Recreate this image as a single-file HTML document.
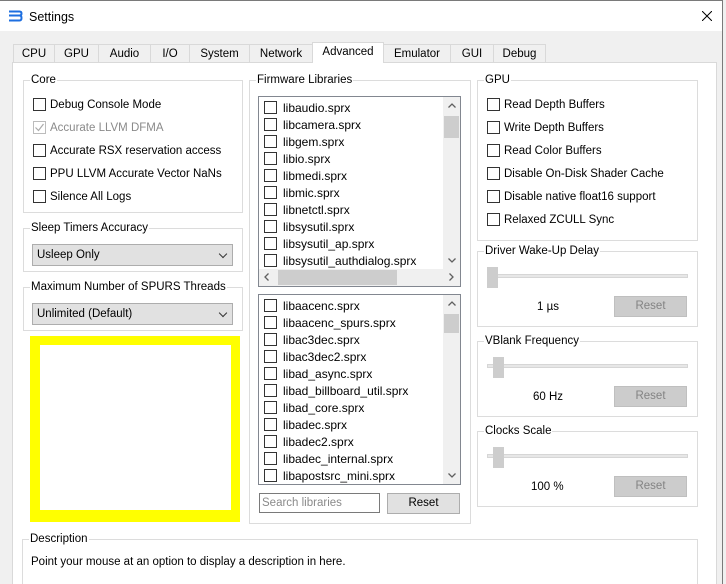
<!DOCTYPE html>
<html><head><meta charset="utf-8"><style>
*{box-sizing:border-box;margin:0;padding:0}
html,body{width:726px;height:584px;overflow:hidden}
body{background:#f0f0f0;font-family:"Liberation Sans",sans-serif;font-size:11.5px;color:#000;position:relative}
.a{position:absolute}
.tb{left:0;top:0;width:722px;height:31px;background:#fff;border-top:1px solid #7a7a7a}
.wb{left:722px;top:0;width:1px;height:584px;background:#7a7a7a}
.tab{position:absolute;top:44px;height:19px;background:#f0f0f0;border:1px solid #d9d9d9;border-bottom:none;text-align:center;line-height:18px;font-size:11.5px}
.pane{left:12px;top:62px;width:705px;height:522px;background:#fff;border:1px solid #d9d9d9;border-bottom:none}
.g{position:absolute;border:1px solid #dcdcdc}
.gt{position:absolute;top:-8px;left:6px;background:#fff;padding:0 1px;line-height:14px}
.cb{position:absolute;width:13px;height:13px;border:1px solid #333;background:#fff}
.lbl{position:absolute;line-height:14px;white-space:nowrap}
.combo{position:absolute;height:22px;background:#e1e1e1;border:1px solid #adadad;line-height:20px;padding-left:4px}
.chev{position:absolute;right:6px;top:6px;width:6px;height:6px;border-right:1px solid #333;border-bottom:1px solid #333;transform:rotate(45deg)}
.lb{position:absolute;border:1px solid #828790;background:#fff;overflow:hidden}
.it{position:absolute;left:5px;height:17px;white-space:nowrap}
.it .cb{left:0;top:2px;border-color:#333}
.it span{position:absolute;left:19px;top:2px;line-height:14px;font-size:12px}
.vs{position:absolute;right:0;top:0;width:17px;background:#f0f0f0;z-index:2}
.btn{position:absolute;background:#e1e1e1;border:1px solid #adadad;text-align:center;line-height:19px}
.dbtn{position:absolute;background:#cccccc;border:1px solid #bfbfbf;color:#838383;text-align:center;line-height:19px}
.track{position:absolute;height:4px;background:#e7e7e7;border:1px solid #d6d6d6}
.hd{position:absolute;width:11px;height:21px;background:#cdcdcd}
</style></head><body>
<div class="a tb">
 <svg class="a" style="left:8px;top:9px" width="15" height="12" viewBox="0 0 15 12"><path d="M1 1.5H11.5Q13.5 1.5 13.5 3.5Q13.5 5.5 11.5 5.5H3M1 5.5H11.5Q13.5 5.5 13.5 8Q13.5 10.5 11.5 10.5H1" fill="none" stroke="#1e6fe0" stroke-width="2"/></svg>
 <div class="lbl" style="left:29px;top:9px;font-size:12.5px">Settings</div>
 <svg class="a" style="left:702px;top:10px" width="10" height="10"><path d="M0 0L10 10M10 0L0 10" stroke="#000" stroke-width="1"/></svg>
</div>
<div class="a wb"></div>
<div class="tab" style="left:13px;width:42px">CPU</div>
<div class="tab" style="left:54px;width:45px">GPU</div>
<div class="tab" style="left:98px;width:53px">Audio</div>
<div class="tab" style="left:150px;width:40px">I/O</div>
<div class="tab" style="left:189px;width:61px">System</div>
<div class="tab" style="left:249px;width:64px">Network</div>
<div class="tab" style="left:383px;width:68px">Emulator</div>
<div class="tab" style="left:450px;width:44px">GUI</div>
<div class="tab" style="left:493px;width:53px">Debug</div>
<div class="a pane"></div>
<div class="tab" style="left:312px;top:42px;width:72px;height:21px;background:#fff;z-index:2">Advanced</div>

<!-- Core -->
<div class="g" style="left:23px;top:80px;width:220px;height:133px"><div class="gt">Core</div></div>
<div class="cb" style="left:33px;top:98px"></div><div class="lbl" style="left:50px;top:98px">Debug Console Mode</div>
<div class="cb" style="left:33px;top:121px;border-color:#bcbcbc"><svg width="11" height="11" style="position:absolute;left:0;top:0"><path d="M1.5 5.5L4.5 8.5L9.5 2" fill="none" stroke="#aaa" stroke-width="1.2"/></svg></div><div class="lbl" style="left:50px;top:121px;color:#8a8a8a">Accurate LLVM DFMA</div>
<div class="cb" style="left:33px;top:144px"></div><div class="lbl" style="left:50px;top:144px">Accurate RSX reservation access</div>
<div class="cb" style="left:33px;top:167px"></div><div class="lbl" style="left:50px;top:167px">PPU LLVM Accurate Vector NaNs</div>
<div class="cb" style="left:33px;top:190px"></div><div class="lbl" style="left:50px;top:190px">Silence All Logs</div>

<div class="g" style="left:23px;top:228px;width:220px;height:44px"><div class="gt">Sleep Timers Accuracy</div></div>
<div class="combo" style="left:32px;top:244px;width:201px">Usleep Only<div class="chev"></div></div>
<div class="g" style="left:23px;top:287px;width:220px;height:44px"><div class="gt">Maximum Number of SPURS Threads</div></div>
<div class="combo" style="left:32px;top:303px;width:201px">Unlimited (Default)<div class="chev"></div></div>

<div class="a" style="left:30px;top:336px;width:210px;height:186px;border:9px solid #ffff00;border-left-width:10px;border-bottom-width:12px;background:#fff"></div>

<!-- Firmware -->
<div class="g" style="left:249px;top:80px;width:222px;height:444px"><div class="gt">Firmware Libraries</div></div>
<div class="lb" style="left:258px;top:96px;width:203px;height:191px">
 <div class="vs" style="height:172px"><svg class="a" style="left:5px;top:6px" width="8" height="5"><path d="M0.5 4.5L4 1L7.5 4.5" fill="none" stroke="#606060" stroke-width="1.3"/></svg><div class="a" style="left:1px;top:19px;width:15px;height:22px;background:#cdcdcd"></div><svg class="a" style="left:5px;top:161px" width="8" height="5"><path d="M0.5 0.5L4 4L7.5 0.5" fill="none" stroke="#606060" stroke-width="1.3"/></svg></div>
 <div class="a" style="left:0;top:172px;width:201px;height:17px;background:#f0f0f0;z-index:2"><div class="a" style="left:19px;top:1px;width:119px;height:15px;background:#cdcdcd"></div><svg class="a" style="left:5px;top:4px" width="5" height="8"><path d="M4.5 0.5L1 4L4.5 7.5" fill="none" stroke="#606060" stroke-width="1.3"/></svg><svg class="a" style="left:190px;top:4px" width="5" height="8"><path d="M0.5 0.5L4 4L0.5 7.5" fill="none" stroke="#606060" stroke-width="1.3"/></svg></div>
 <div class="it" style="top:2px"><div class="cb"></div><span>libaudio.sprx</span></div>
 <div class="it" style="top:19px"><div class="cb"></div><span>libcamera.sprx</span></div>
 <div class="it" style="top:36px"><div class="cb"></div><span>libgem.sprx</span></div>
 <div class="it" style="top:53px"><div class="cb"></div><span>libio.sprx</span></div>
 <div class="it" style="top:70px"><div class="cb"></div><span>libmedi.sprx</span></div>
 <div class="it" style="top:87px"><div class="cb"></div><span>libmic.sprx</span></div>
 <div class="it" style="top:104px"><div class="cb"></div><span>libnetctl.sprx</span></div>
 <div class="it" style="top:121px"><div class="cb"></div><span>libsysutil.sprx</span></div>
 <div class="it" style="top:138px"><div class="cb"></div><span>libsysutil_ap.sprx</span></div>
 <div class="it" style="top:155px"><div class="cb"></div><span>libsysutil_authdialog.sprx</span></div>
</div>
<div class="lb" style="left:258px;top:294px;width:203px;height:191px">
 <div class="vs" style="height:189px"><svg class="a" style="left:5px;top:6px" width="8" height="5"><path d="M0.5 4.5L4 1L7.5 4.5" fill="none" stroke="#606060" stroke-width="1.3"/></svg><div class="a" style="left:1px;top:19px;width:15px;height:19px;background:#cdcdcd"></div><svg class="a" style="left:5px;top:178px" width="8" height="5"><path d="M0.5 0.5L4 4L7.5 0.5" fill="none" stroke="#606060" stroke-width="1.3"/></svg></div>
 <div class="it" style="top:2px"><div class="cb"></div><span>libaacenc.sprx</span></div>
 <div class="it" style="top:19px"><div class="cb"></div><span>libaacenc_spurs.sprx</span></div>
 <div class="it" style="top:36px"><div class="cb"></div><span>libac3dec.sprx</span></div>
 <div class="it" style="top:53px"><div class="cb"></div><span>libac3dec2.sprx</span></div>
 <div class="it" style="top:70px"><div class="cb"></div><span>libad_async.sprx</span></div>
 <div class="it" style="top:87px"><div class="cb"></div><span>libad_billboard_util.sprx</span></div>
 <div class="it" style="top:104px"><div class="cb"></div><span>libad_core.sprx</span></div>
 <div class="it" style="top:121px"><div class="cb"></div><span>libadec.sprx</span></div>
 <div class="it" style="top:138px"><div class="cb"></div><span>libadec2.sprx</span></div>
 <div class="it" style="top:155px"><div class="cb"></div><span>libadec_internal.sprx</span></div>
 <div class="it" style="top:172px"><div class="cb"></div><span>libapostsrc_mini.sprx</span></div>
</div>
<div class="a" style="left:259px;top:493px;width:121px;height:20px;border:1px solid #7a7a7a;background:#fff;color:#8a8a8a;line-height:18px;padding-left:2px">Search libraries</div>
<div class="btn" style="left:387px;top:493px;width:73px;height:21px">Reset</div>

<!-- GPU -->
<div class="g" style="left:477px;top:80px;width:221px;height:161px"><div class="gt">GPU</div></div>
<div class="cb" style="left:487px;top:98px"></div><div class="lbl" style="left:504px;top:98px">Read Depth Buffers</div>
<div class="cb" style="left:487px;top:121px"></div><div class="lbl" style="left:504px;top:121px">Write Depth Buffers</div>
<div class="cb" style="left:487px;top:144px"></div><div class="lbl" style="left:504px;top:144px">Read Color Buffers</div>
<div class="cb" style="left:487px;top:167px"></div><div class="lbl" style="left:504px;top:167px">Disable On-Disk Shader Cache</div>
<div class="cb" style="left:487px;top:190px"></div><div class="lbl" style="left:504px;top:190px">Disable native float16 support</div>
<div class="cb" style="left:487px;top:213px"></div><div class="lbl" style="left:504px;top:213px">Relaxed ZCULL Sync</div>

<div class="g" style="left:477px;top:251px;width:221px;height:76px"><div class="gt">Driver Wake-Up Delay</div></div>
<div class="track" style="left:487px;top:274px;width:201px"></div><div class="hd" style="left:487px;top:267px"></div>
<div class="lbl" style="left:537px;top:300px">1 µs</div>
<div class="dbtn" style="left:614px;top:296px;width:73px;height:21px">Reset</div>

<div class="g" style="left:477px;top:341px;width:221px;height:76px"><div class="gt">VBlank Frequency</div></div>
<div class="track" style="left:487px;top:364px;width:201px"></div><div class="hd" style="left:493px;top:357px"></div>
<div class="lbl" style="left:533px;top:390px">60 Hz</div>
<div class="dbtn" style="left:614px;top:386px;width:73px;height:21px">Reset</div>

<div class="g" style="left:477px;top:431px;width:221px;height:76px"><div class="gt">Clocks Scale</div></div>
<div class="track" style="left:487px;top:454px;width:201px"></div><div class="hd" style="left:493px;top:447px"></div>
<div class="lbl" style="left:531px;top:480px">100 %</div>
<div class="dbtn" style="left:614px;top:476px;width:73px;height:21px">Reset</div>

<div class="g" style="left:22px;top:539px;width:676px;height:60px"><div class="gt">Description</div></div>
<div class="lbl" style="left:31px;top:555px">Point your mouse at an option to display a description in here.</div>
</body></html>
